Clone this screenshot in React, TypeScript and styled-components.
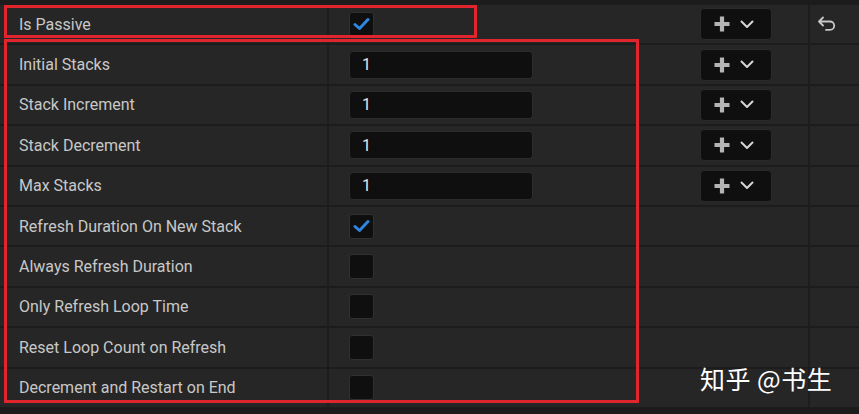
import React from 'react';
import styled, { createGlobalStyle } from 'styled-components';

interface Field {
    label: string;
    kind: 'check' | 'number';
    checked?: boolean;
    value?: string;
    extend?: boolean;
    reset?: boolean;
}

const fields: Field[] = [
    { label: 'Is Passive', kind: 'check', checked: true, extend: true, reset: true },
    { label: 'Initial Stacks', kind: 'number', value: '1', extend: true },
    { label: 'Stack Increment', kind: 'number', value: '1', extend: true },
    { label: 'Stack Decrement', kind: 'number', value: '1', extend: true },
    { label: 'Max Stacks', kind: 'number', value: '1', extend: true },
    { label: 'Refresh Duration On New Stack', kind: 'check', checked: true },
    { label: 'Always Refresh Duration', kind: 'check' },
    { label: 'Only Refresh Loop Time', kind: 'check' },
    { label: 'Reset Loop Count on Refresh', kind: 'check' },
    { label: 'Decrement and Restart on End', kind: 'check' },
];

const CheckIcon = () => (
    <svg width="17" height="14" viewBox="0 0 17 14">
        <path d="M2 7.5 L6.5 11.5 L15 2.5" fill="none" stroke="#2f86e0" strokeWidth="3" strokeLinecap="round" strokeLinejoin="round" />
    </svg>
);

const PlusIcon = () => (
    <svg width="18" height="18" viewBox="0 0 18 18">
        <path d="M9 1.5 V16.5 M1.5 9 H16.5" stroke="#b4b4b4" strokeWidth="4.2" strokeLinecap="butt" />
    </svg>
);

const ChevronIcon = () => (
    <svg width="14" height="9" viewBox="0 0 14 9">
        <path d="M1.5 1.5 L7 7 L12.5 1.5" fill="none" stroke="#d6d6d6" strokeWidth="2" strokeLinecap="round" strokeLinejoin="round" />
    </svg>
);

const ResetIcon = () => (
    <svg width="20" height="16" viewBox="0 0 20 16">
        <path
            d="M6 1.5 L2 5.5 L6 9.5 M2 5.5 H13 a4.2 4.2 0 0 1 0 8.4 H9"
            fill="none"
            stroke="#c8c8c8"
            strokeWidth="1.8"
            strokeLinecap="round"
            strokeLinejoin="round"
        />
    </svg>
);

const App = () => {
    return (
        <>
            <GlobalStyle />
            <Panel>
                <TopStrip />
                {fields.map((field) => (
                    <Row key={field.label}>
                        <NameCell>{field.label}</NameCell>
                        <ValueCell>
                            {field.kind === 'check' ? (
                                <Checkbox>{field.checked && <CheckIcon />}</Checkbox>
                            ) : (
                                <NumberBox>{field.value}</NumberBox>
                            )}
                            {field.extend && (
                                <AddButton>
                                    <PlusIcon />
                                    <ChevronIcon />
                                </AddButton>
                            )}
                        </ValueCell>
                        <ResetCell>{field.reset && <ResetIcon />}</ResetCell>
                    </Row>
                ))}
                <BottomStrip />
                <Highlight $left={4} $top={5} $width={473} $height={33} />
                <Highlight $left={4} $top={39} $width={635} $height={364} />
                <Watermark>知乎 @书生</Watermark>
            </Panel>
        </>
    );
};

const GlobalStyle = createGlobalStyle`
    html, body {
        margin: 0;
        padding: 0;
        background: #1b1b1b;
    }
    body {
        font-family: Roboto, "Noto Sans", sans-serif;
    }
`;

const Panel = styled.div`
    position: relative;
    width: 859px;
    height: 414px;
    overflow: hidden;
    background: #1b1b1b;
    display: flex;
    flex-direction: column;
`;

const TopStrip = styled.div`
    height: 5px;
    flex: none;
    background: #1c1c1c;
`;

const BottomStrip = styled.div`
    flex: 1;
    background: #1b1b1b;
`;

const Row = styled.div`
    flex: none;
    height: 38.4px;
    border-bottom: 2px solid #1c1c1c;
    background: #262626;
    display: grid;
    grid-template-columns: 329px 481px 1fr;
`;

const NameCell = styled.div`
    display: flex;
    align-items: center;
    padding-left: 19px;
    border-right: 2px solid #1d1d1d;
    color: #c8c8c8;
    font-size: 16px;
`;

const ValueCell = styled.div`
    display: flex;
    align-items: center;
    padding-left: 20px;
    padding-right: 36px;
    border-right: 2px solid #1d1d1d;
`;

const ResetCell = styled.div`
    display: flex;
    align-items: center;
    justify-content: center;
    padding-right: 16px;
`;

const Checkbox = styled.div`
    width: 25px;
    height: 25px;
    box-sizing: border-box;
    border-radius: 3px;
    background: #0f0f0f;
    border: 1px solid #303030;
    display: flex;
    align-items: center;
    justify-content: center;
`;

const NumberBox = styled.div`
    width: 184px;
    height: 28px;
    box-sizing: border-box;
    border-radius: 4px;
    background: #0f0f0f;
    border: 1px solid #2c2c2c;
    color: #e6e6e6;
    font-size: 16px;
    padding-left: 12px;
    display: flex;
    align-items: center;
`;

const AddButton = styled.div`
    margin-left: auto;
    width: 72px;
    height: 32px;
    box-sizing: border-box;
    border-radius: 4px;
    background: #0f0f0f;
    border: 1px solid #2a2a2a;
    display: flex;
    align-items: center;
    gap: 9px;
    padding-left: 12px;
`;

const Highlight = styled.div<{ $left: number; $top: number; $width: number; $height: number }>`
    position: absolute;
    left: ${(p) => p.$left}px;
    top: ${(p) => p.$top}px;
    width: ${(p) => p.$width}px;
    height: ${(p) => p.$height}px;
    box-sizing: border-box;
    border: 3px solid #e1252e;
    pointer-events: none;
`;

const Watermark = styled.div`
    position: absolute;
    left: 700px;
    top: 360px;
    color: #ffffff;
    font-family: "Noto Sans CJK SC", "Noto Sans", sans-serif;
    font-size: 25px;
    letter-spacing: 0.5px;
`;

export default App;
